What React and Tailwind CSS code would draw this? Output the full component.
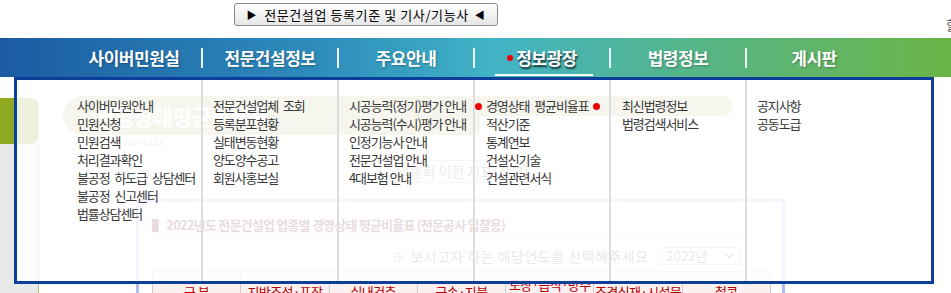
import React from "react";

const navItems = ["사이버민원실", "전문건설정보", "주요안내", "정보광장", "법령정보", "게시판"];

function Nav() {
  return (
    <div className="h-[39px] flex items-center pl-[67px] bg-[linear-gradient(to_right,#1b5ba2_0%,#2f8fbd_35%,#42b4c6_52%,#55b58a_72%,#6bb546_100%)]">
      {navItems.map((t, i) => (
        <React.Fragment key={t}>
          {i > 0 && <div className="w-[2px] h-[20px] bg-white/90" />}
          <div className="relative w-[134px] h-full flex items-center justify-center">
            {i === 3 ? (
              <>
                <span className="w-[6px] h-[6px] rounded-full bg-[#f00000] mr-[3px] mt-[1px]" />
                <span className="text-[17px] font-bold text-white tracking-[-0.5px] [text-shadow:1px_2px_2px_rgba(0,0,0,0.75)]">{t}</span>
                <div className="absolute left-[20px] w-[98px] bottom-[1px] h-[2px] bg-white" />
              </>
            ) : (
              <span className="text-[17px] font-bold text-white tracking-[-0.5px] [text-shadow:1px_1px_2px_rgba(0,0,0,0.3)]">{t}</span>
            )}
          </div>
        </React.Fragment>
      ))}
    </div>
  );
}

function Item({ children }) {
  return <div className="h-[18px] leading-[18px] whitespace-nowrap">{children}</div>;
}

function Dropdown() {
  return (
    <div className="absolute left-[14px] top-0 w-[920px] h-[207px] border-[3px] border-[#0c3f99] bg-white/85 flex text-[13px] text-[#383838] tracking-[-1.1px] [word-spacing:3px]">
      <div className="w-[186px] h-full border-r-2 border-[#dddddd] pl-[60px] pt-[17px]">
        <Item>사이버민원안내</Item>
        <Item>민원신청</Item>
        <Item>민원검색</Item>
        <Item>처리결과확인</Item>
        <Item>불공정 하도급 상담센터</Item>
        <Item>불공정 신고센터</Item>
        <Item>법률상담센터</Item>
      </div>
      <div className="w-[136px] h-full border-r-2 border-[#dddddd] pl-[10px] pt-[17px]">
        <Item>전문건설업체 조회</Item>
        <Item>등록분포현황</Item>
        <Item>실태변동현황</Item>
        <Item>양도양수공고</Item>
        <Item>회원사홍보실</Item>
      </div>
      <div className="w-[136px] h-full border-r-2 border-[#dddddd] pl-[10px] pt-[17px] [word-spacing:0px]">
        <Item>시공능력(정기)평가 안내</Item>
        <Item>시공능력(수시)평가 안내</Item>
        <Item>인정기능사 안내</Item>
        <Item>전문건설업 안내</Item>
        <Item>4대보험 안내</Item>
      </div>
      <div className="w-[136px] h-full border-r-2 border-[#dddddd] pl-[11px] pt-[17px]">
        <div className="h-[18px] leading-[18px] whitespace-nowrap flex items-center -ml-[11px]">
          <span className="w-[7px] h-[7px] rounded-full bg-[#f00000] mr-[4px] shrink-0" />
          <span>경영상태 평균비율표</span>
          <span className="w-[7px] h-[7px] rounded-full bg-[#f00000] ml-[4px] shrink-0" />
        </div>
        <Item>적산기준</Item>
        <Item>통계연보</Item>
        <Item>건설신기술</Item>
        <Item>건설관련서식</Item>
      </div>
      <div className="w-[136px] h-full border-r-2 border-[#dddddd] pl-[11px] pt-[17px]">
        <Item>최신법령정보</Item>
        <Item>법령검색서비스</Item>
      </div>
      <div className="flex-1 h-full pl-[10px] pt-[17px]">
        <Item>공지사항</Item>
        <Item>공동도급</Item>
      </div>
    </div>
  );
}

const heads = ["구 분", "지반조성·포장", "실내건축", "금속·지붕", "도장·습식·방수·석공", "조경식재·시설물", "철콘"];

function PageBehind() {
  return (
    <div className="flex h-[216px]">
      <div className="w-[39px] flex flex-col shrink-0">
        <div className="h-[21px] bg-white" />
        <div className="h-[46px] bg-[#8ea91f] rounded-r-[8px]" />
        <div className="flex-1 bg-[#e9e9e9] border-r border-[#b3c06a]" />
      </div>
      <div className="flex-1 flex flex-col">
        <div className="mt-[19px] ml-[24px] flex items-start">
          <div className="w-[417px] h-[39px] bg-[#c4c596] rounded-l-[20px] pl-[32px] flex items-center">
            <span className="text-[22px] font-bold text-white tracking-[-1px]">경영상태평균비율표</span>
          </div>
          <div className="w-[253px] h-[20px] bg-[#c4c596] rounded-r-[10px]" />
        </div>
        <div className="ml-[85px] mt-[4px] h-[10px] text-[8px] leading-[10px] text-[#999] font-['Liberation_Sans',sans-serif]">ON PLAZA</div>
        <div className="ml-[340px] mt-[11px] w-[167px] h-[24px] border border-[#bbbbbb] rounded-r-[12px] flex items-center justify-center text-[14px] text-[#777]">
          업종화 이전 지표(참고)
        </div>
        <div className="ml-[97px] mt-[16px] w-[649px] flex-1 border-[3px] border-b-0 border-[#aabff3] flex flex-col">
          <div className="ml-[13px] mr-[25px] pt-[14px] pb-[4px] border-b border-[#e0e0e0] text-[13px] leading-[18px] font-bold text-[#661111] tracking-[-0.8px] whitespace-nowrap">
            ▌ 2022년도 전문건설업 업종별 경영상태 평균비율표 (전문공사 입찰용)
          </div>
          <div className="mt-[8px] h-[18px] flex items-center">
            <span className="ml-[253px] text-[14px] text-[#666] tracking-[0.5px] whitespace-nowrap">※ 보시고자 하는 해당연도를 선택해주세요</span>
            <div className="ml-[12px] w-[79px] h-[18px] border border-[#cccccc] rounded-[3px] flex items-center justify-between px-[5px] text-[13px] text-[#666]">
              <span>2022년</span>
              <svg width="10" height="10" viewBox="0 0 10 10"><path d="M2 3.5 L5 6.5 L8 3.5" fill="none" stroke="#666" strokeWidth="1.6" /></svg>
            </div>
          </div>
          <div className="mt-[6px] ml-[13px] w-[619px] grid grid-cols-7 border-t border-l border-[#cfcfcf]">
            {heads.map((h) => (
              <div key={h} className="h-[40px] border-r border-b border-[#cfcfcf] bg-[#fdf0f0] flex items-center justify-center text-center text-[13px] leading-[15px] text-[#b40000] tracking-[-0.6px] whitespace-normal">
                {h}
              </div>
            ))}
          </div>
        </div>
      </div>
    </div>
  );
}

export default function App() {
  return (
    <div className="w-[951px] h-[293px] overflow-hidden bg-white font-['Noto_Sans_CJK_KR','Noto_Sans',sans-serif]">
      <div className="h-[38px] flex items-start">
        <div className="ml-[234px] mt-[3px] h-[23px] w-[264px] border border-[#8c8c8c] rounded-[3px] bg-[linear-gradient(#fefefe,#e6e6e6)] flex items-center justify-center text-[13px] text-black whitespace-nowrap tracking-[0.6px]">
          <span className="text-[10px] mr-[7px]">▶</span>
          전문건설업 등록기준 및 기사/기능사
          <span className="text-[10px] ml-[6px]">◀</span>
        </div>
        <span className="ml-auto mr-[-7px] mt-[15px] text-[13px] text-[#555]">할</span>
      </div>
      <Nav />
      <div className="relative">
        <PageBehind />
        <Dropdown />
      </div>
    </div>
  );
}
